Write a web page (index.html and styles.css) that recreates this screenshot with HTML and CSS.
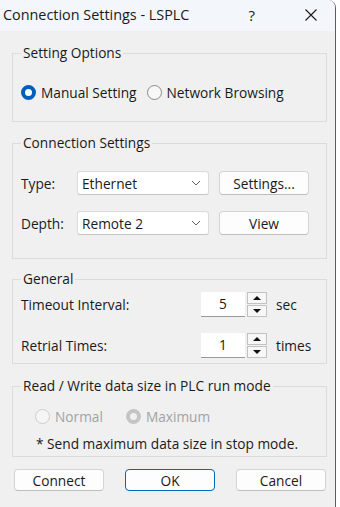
FILE: index.html
```html
<!DOCTYPE html>
<html lang="en">
  <head>
    <meta charset="UTF-8" />
    <meta name="viewport" content="width=device-width, initial-scale=1.0" />
    <title>Connection Settings - LSPLC</title>
    <link rel="stylesheet" href="styles.css">
  </head>
  <body>
    <div class="window">
      <div class="titlebar">
        <span class="title">Connection Settings - LSPLC</span>
        <span class="help">?</span>
        <span class="close">
          <svg width="12" height="12" viewBox="0 0 12 12">
            <path d="M0.5 0.5 L11.5 11.5 M11.5 0.5 L0.5 11.5" stroke="#1a1a1a" stroke-width="1.1" fill="none" />
          </svg>
        </span>
      </div>

      <div class="content">
        <fieldset class="group options-group">
          <legend>Setting Options</legend>
          <div class="radio-row">
            <label class="radio-item">
              <span class="radio checked"></span>
              Manual Setting
            </label>
            <label class="radio-item">
              <span class="radio"></span>
              Network Browsing
            </label>
          </div>
        </fieldset>

        <fieldset class="group connection-group">
          <legend>Connection Settings</legend>
          <div class="form-row">
            <span class="field-label">Type:</span>
            <div class="combo">
              <span>Ethernet</span>
              <svg class="chevron" width="10" height="6" viewBox="0 0 10 6">
                <path d="M1 1 L5 5 L9 1" stroke="#606060" stroke-width="1" fill="none" />
              </svg>
            </div>
            <button class="btn side-btn">Settings...</button>
          </div>
          <div class="form-row">
            <span class="field-label">Depth:</span>
            <div class="combo">
              <span>Remote 2</span>
              <svg class="chevron" width="10" height="6" viewBox="0 0 10 6">
                <path d="M1 1 L5 5 L9 1" stroke="#606060" stroke-width="1" fill="none" />
              </svg>
            </div>
            <button class="btn side-btn">View</button>
          </div>
        </fieldset>

        <fieldset class="group general-group">
          <legend>General</legend>
          <div class="spin-row">
            <span class="spin-label">Timeout Interval:</span>
            <div class="spin-field">5</div>
            <div class="spinner">
              <span class="spin-btn"><span class="arrow-up"></span></span>
              <span class="spin-btn"><span class="arrow-down"></span></span>
            </div>
            <span class="unit">sec</span>
          </div>
          <div class="spin-row">
            <span class="spin-label">Retrial Times:</span>
            <div class="spin-field">1</div>
            <div class="spinner">
              <span class="spin-btn"><span class="arrow-up"></span></span>
              <span class="spin-btn"><span class="arrow-down"></span></span>
            </div>
            <span class="unit">times</span>
          </div>
        </fieldset>

        <fieldset class="group size-group">
          <legend>Read / Write data size in PLC run mode</legend>
          <div class="radio-row disabled-row">
            <label class="radio-item">
              <span class="radio disabled"></span>
              Normal
            </label>
            <label class="radio-item">
              <span class="radio disabled checked"></span>
              Maximum
            </label>
          </div>
          <div class="note">* Send maximum data size in stop mode.</div>
        </fieldset>

        <div class="button-row">
          <button class="btn">Connect</button>
          <button class="btn primary">OK</button>
          <button class="btn">Cancel</button>
        </div>
      </div>
    </div>
  </body>
</html>
```
FILE: styles.css
```css
* {
  margin: 0;
  padding: 0;
  box-sizing: border-box;
}

body {
  background: #ffffff;
  font-family: "Open Sans", "Noto Sans", sans-serif;
  font-size: 13.7px;
  color: #1a1a1a;
  overflow: hidden;
}

.window {
  width: 336px;
  height: 507px;
  background: #f0f0f0;
  border-right: 1px solid #5c5c5c;
  border-top-right-radius: 8px;
  overflow: hidden;
}

.titlebar {
  height: 31px;
  background: #f3f6fb;
  display: flex;
  align-items: center;
}

.title {
  font-size: 14.4px;
  padding-left: 3px;
  line-height: 20px;
  margin-top: -1px;
}

.help {
  margin-left: 59px;
  font-size: 15px;
  line-height: 20px;
  margin-top: -2px;
}

.close {
  margin-left: 50px;
  display: flex;
  margin-top: -2px;
}

.content {
  padding: 14px 8px 0 12px;
}

.group {
  border: 1px solid #dcdcdc;
  padding: 0 8px;
  min-width: 0;
}

.group legend {
  padding: 0 2px;
  line-height: 16px;
  color: #1a1a1a;
}

/* setting options */

.options-group {
  padding-top: 21px;
  padding-bottom: 19px;
}

.radio-row {
  display: flex;
  align-items: center;
  height: 20px;
}

.radio-item {
  display: flex;
  align-items: center;
  gap: 5px;
  margin-right: 10px;
}

.radio {
  width: 15px;
  height: 15px;
  border-radius: 50%;
  border: 1px solid #8a8a8a;
  background: #f7f7f7;
  display: inline-block;
}

.radio.checked {
  border: 4.5px solid #005fb8;
  background: #ffffff;
}

.radio.disabled {
  border-color: #cdcdcd;
  background: #f5f5f5;
}

.radio.disabled.checked {
  border: 4.5px solid #c4c4c4;
  background: #f0f0f0;
}

/* connection settings */

.connection-group {
  margin-top: 13px;
  padding-top: 20px;
  padding-bottom: 23px;
}

.form-row {
  display: flex;
  align-items: center;
  height: 24px;
}

.form-row + .form-row {
  margin-top: 16px;
}

.field-label {
  width: 56px;
}

.combo {
  width: 132px;
  height: 24px;
  background: #ffffff;
  border: 1px solid #dadada;
  border-bottom-color: #c4c4c4;
  border-radius: 3px;
  display: flex;
  align-items: center;
  justify-content: space-between;
  padding: 0 7px 0 4px;
}

.btn {
  font-family: inherit;
  font-size: 13.7px;
  color: #1a1a1a;
  background: #fdfdfd;
  border: 1px solid #d4d4d4;
  border-bottom-color: #bdbdbd;
  border-radius: 4px;
  height: 24px;
  width: 90px;
}

.side-btn {
  margin-left: 10px;
}

/* general */

.general-group {
  margin-top: 12px;
  padding-top: 5px;
  padding-bottom: 5px;
}

.spin-row {
  display: flex;
  align-items: center;
  height: 25px;
}

.spin-row + .spin-row {
  margin-top: 16px;
}

.spin-label {
  width: 180px;
}

.spin-field {
  width: 44px;
  height: 25px;
  background: #ffffff;
  border-bottom: 1px solid #9a9a9a;
  text-align: center;
  line-height: 24px;
}

.spinner {
  margin-left: 2px;
  width: 20px;
  display: flex;
  flex-direction: column;
}

.spin-btn {
  height: 12px;
  border: 1px solid #c2c2c2;
  background: #f7f7f7;
  display: flex;
  align-items: center;
  justify-content: center;
}

.spin-btn + .spin-btn {
  margin-top: 1px;
}

.arrow-up {
  border-left: 4px solid transparent;
  border-right: 4px solid transparent;
  border-bottom: 4px solid #111111;
}

.arrow-down {
  border-left: 4px solid transparent;
  border-right: 4px solid transparent;
  border-top: 4px solid #111111;
}

.unit {
  margin-left: 9px;
}

/* read / write size */

.size-group {
  margin-top: 14px;
  padding-top: 12px;
  padding-bottom: 4px;
}

.disabled-row {
  padding-left: 14px;
  color: #a2a2a2;
}

.disabled-row .radio-item {
  margin-right: 23px;
}

.note {
  margin-top: 10px;
  line-height: 16px;
  padding-left: 15px;
}

/* dialog buttons */

.button-row {
  margin-top: 12px;
  display: flex;
  justify-content: space-between;
  padding: 0 1px 0 2px;
}

.button-row .btn {
  height: 22px;
}

.btn.primary {
  border: 1px solid #0067c0;
}
```
